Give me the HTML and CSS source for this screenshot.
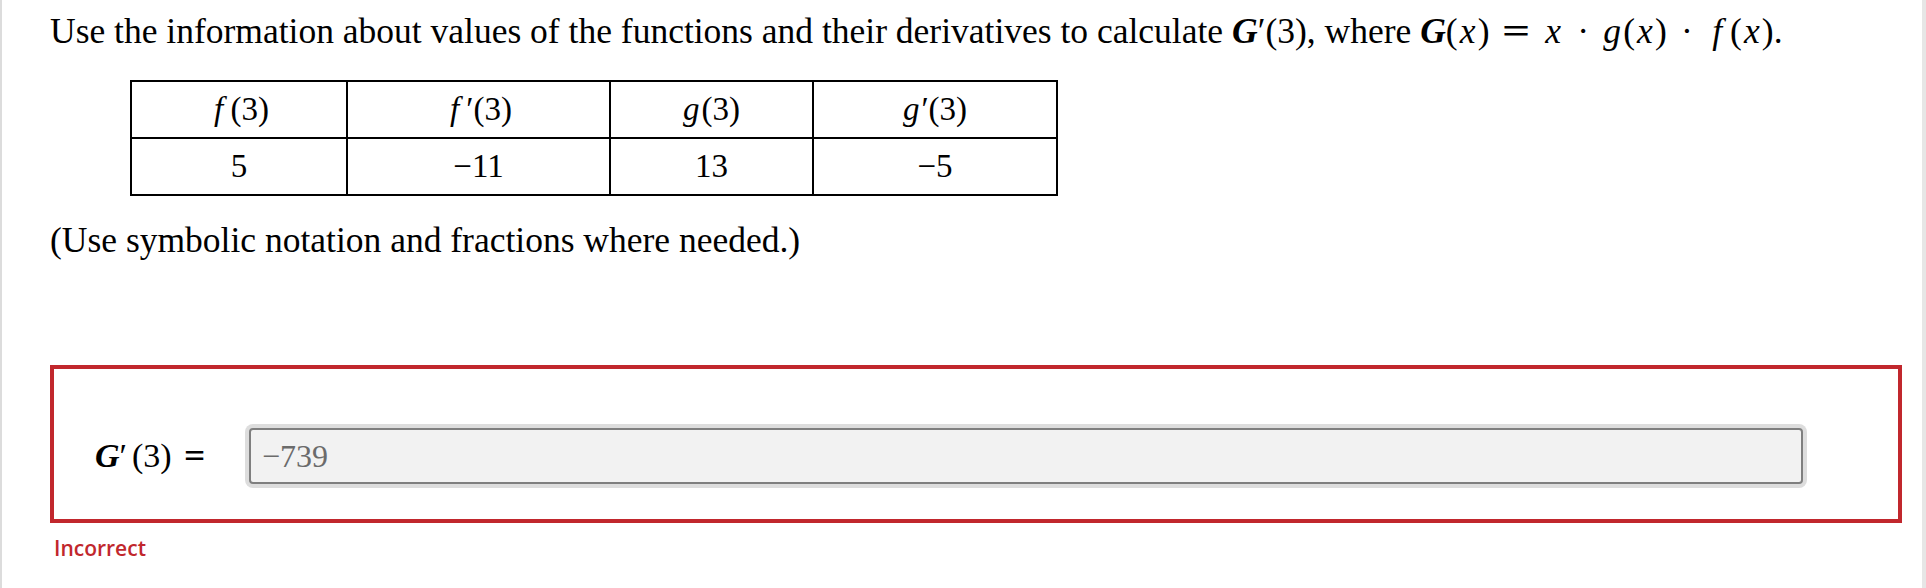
FILE: index.html
```html
<!DOCTYPE html>
<html lang="en">
<head>
<meta charset="utf-8">
<title>Derivative question</title>
<link rel="stylesheet" href="styles.css">
</head>
<body>
<div class="page">
  <p class="prompt">Use the information about values of the functions and their derivatives to calculate <b class="mv">G</b>′(3), where <b class="mv">G</b>(<i class="x">x</i>) <span class="rel">=</span> <i class="x">x</i> <span class="op">·</span> <i class="g">g</i>(<i class="x">x</i>) <span class="op">·</span> <i class="f">f</i>(<i class="x">x</i>).</p>

  <table class="values">
    <colgroup>
      <col class="c1"><col class="c2"><col class="c3"><col class="c4">
    </colgroup>
    <tr>
      <td><i class="f">f</i>(3)</td>
      <td><i class="f">f</i>′(3)</td>
      <td><i class="g">g</i>(3)</td>
      <td><i class="g">g</i>′(3)</td>
    </tr>
    <tr>
      <td>5</td>
      <td>−11</td>
      <td>13</td>
      <td>−5</td>
    </tr>
  </table>

  <p class="note">(Use symbolic notation and fractions where needed.)</p>

  <div class="answer">
    <span class="label"><b class="mv">G</b>′<span class="arg">(3)</span><span class="eq">=</span></span>
    <div class="field">−739</div>
  </div>
  <div class="status">Incorrect</div>
</div>
</body>
</html>
```

FILE: styles.css
```css
html, body {
  margin: 0;
  padding: 0;
  background: #ffffff;
}

.page {
  width: 1926px;
  height: 588px;
  box-sizing: border-box;
  border-left: 2px solid #dcdcdc;
  border-right: 4px solid #e6e6e6;
  padding: 10px 20px 0 48px;
  font-family: "Liberation Serif", "DejaVu Serif", serif;
  color: #000;
}

.prompt {
  margin: 0;
  font-size: 35.5px;
  line-height: 42px;
  white-space: nowrap;
}

.mv {
  font-style: italic;
  font-weight: bold;
}

i.f {
  margin: 0 0.22em 0 0.15em;
}

i.g {
  margin-right: 0.06em;
}

i.x {
  margin: 0 0.06em;
}

.rel {
  display: inline-block;
  font-weight: bold;
  transform: scaleX(1.4);
  margin: 0 0.22em;
}

.op {
  margin: 0 0.15em;
}

.values {
  margin: 28px 0 0 80px;
  border-collapse: collapse;
  table-layout: fixed;
  width: 926px;
  font-size: 33px;
}

.values .c1 { width: 216px; }
.values .c2 { width: 263px; }
.values .c3 { width: 203px; }
.values .c4 { width: 244px; }

.values td {
  border: 2px solid #000;
  height: 57px;
  padding: 0;
  text-align: center;
  vertical-align: middle;
  box-sizing: border-box;
  line-height: 1;
}

.note {
  margin: 23px 0 0 0;
  font-size: 35.5px;
  line-height: 42px;
}

.answer {
  margin-top: 104px;
  border: 4px solid #c1272d;
  height: 158px;
  box-sizing: border-box;
  padding: 55px 95px 32px 41px;
  display: flex;
  align-items: center;
}

.label {
  width: 150px;
  flex: none;
  font-size: 34px;
  white-space: nowrap;
  display: flex;
  align-items: baseline;
}

.label .arg {
  margin-left: 5px;
}

.label .eq {
  display: inline-block;
  font-weight: bold;
  transform: scaleX(1.1);
  margin-left: 13px;
}

.field {
  flex: 1;
  margin-left: 4px;
  height: 56px;
  box-sizing: border-box;
  border: 2px solid #7f7f7f;
  border-radius: 4px;
  box-shadow: 0 0 0 4px #dddddd;
  background: #f2f2f2;
  color: #6b6b6b;
  font-size: 32px;
  line-height: 52px;
  padding-left: 11px;
}

.status {
  margin: 11px 0 0 4px;
  font-family: "Open Sans", "Noto Sans", sans-serif;
  font-weight: 600;
  font-size: 21px;
  color: #c1272d;
}
```
